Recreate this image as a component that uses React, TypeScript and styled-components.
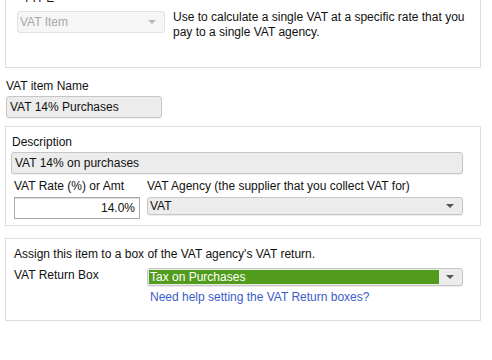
import React from "react";
import styled, { createGlobalStyle } from "styled-components";

const Global = createGlobalStyle`
  html, body { margin: 0; padding: 0; background: #fff; }
  body { font-family: "Liberation Sans", Arial, sans-serif; font-size: 12px; color: #111; }
`;

const Page = styled.div`
  width: 492px;
  height: 360px;
  overflow: hidden;
  padding: 0 11px 0 5px;
  box-sizing: border-box;
`;

const TypeFieldset = styled.fieldset`
  margin: -9px 0 0 0;
  padding: 2px 5px 0 11px;
  border: 1px solid #dedede;
  height: 73px;
  box-sizing: content-box;
  display: flex;
  align-items: flex-start;
  gap: 8px;
`;

const Legend = styled.legend`
  padding: 0 2px;
  margin-left: 4px;
  font-size: 12px;
  color: #222;
  line-height: 14px;
`;

const Panel = styled.div`
  border: 1px solid #dedede;
`;

const Select = styled.div<{ $w?: number; $disabled?: boolean; $mt?: number }>`
  width: ${(p) => (p.$w ? `${p.$w}px` : "auto")};
  height: 22px;
  margin-top: ${(p) => p.$mt ?? 0}px;
  box-sizing: border-box;
  border: 1px solid ${(p) => (p.$disabled ? "#e2e2e2" : "#c6c6c6")};
  border-radius: 3px;
  background: ${(p) => (p.$disabled ? "#f6f6f6" : "#ececec")};
  display: flex;
  align-items: stretch;
  padding: 1px;
  color: ${(p) => (p.$disabled ? "#a8a8a8" : "#111")};
  box-shadow: ${(p) => (p.$disabled ? "none" : "0 1px 1px rgba(0,0,0,0.08)")};
  flex: ${(p) => (p.$w ? "none" : "1")};
`;

const SelectValue = styled.div<{ $selected?: boolean }>`
  flex: 1;
  display: flex;
  align-items: center;
  padding-left: 1px;
  line-height: 14px;
  background: ${(p) => (p.$selected ? "#519c1c" : "transparent")};
  color: ${(p) => (p.$selected ? "#fff" : "inherit")};
`;

const Arrow = styled.div<{ $disabled?: boolean }>`
  width: 22px;
  display: flex;
  align-items: center;
  justify-content: center;
  &::after {
    content: "";
    border-left: 4px solid transparent;
    border-right: 4px solid transparent;
    border-top: 4px solid ${(p) => (p.$disabled ? "#b8b8b8" : "#555")};
  }
`;

const TypeText = styled.div`
  width: 300px;
  line-height: 15px;
  padding-top: 3px;
  color: #111;
  font-size: 12px;
`;

const Label = styled.div<{ $pl?: number; $w?: number }>`
  line-height: 14px;
  padding-left: ${(p) => p.$pl ?? 0}px;
  width: ${(p) => (p.$w ? `${p.$w}px` : "auto")};
  flex: none;
  color: #111;
`;

const Field = styled.div<{ $w?: number; $white?: boolean; $right?: boolean }>`
  width: ${(p) => (p.$w ? `${p.$w}px` : "auto")};
  height: 22px;
  box-sizing: border-box;
  border: 1px solid ${(p) => (p.$white ? "#a9a9a9" : "#c6c6c6")};
  border-radius: ${(p) => (p.$white ? "0" : "3px")};
  background: ${(p) => (p.$white ? "#fff" : "#ececec")};
  display: flex;
  align-items: center;
  justify-content: ${(p) => (p.$right ? "flex-end" : "flex-start")};
  padding: 0 4px 0 3px;
  box-shadow: ${(p) => (p.$white ? "inset 0 1px 0 #ddd" : "0 1px 1px rgba(0,0,0,0.06)")};
  color: #111;
`;

const NameBlock = styled.div`
  display: flex;
  flex-direction: column;
  gap: 3px;
  padding: 11px 0 0 1px;
  margin-bottom: 8px;
`;

const Row = styled.div<{ $gap?: number; $mt?: number; $pl?: number }>`
  display: flex;
  gap: ${(p) => p.$gap ?? 0}px;
  margin-top: ${(p) => p.$mt ?? 0}px;
  padding-left: ${(p) => p.$pl ?? 0}px;
  align-items: flex-start;
`;

const Col = styled.div<{ $w?: number; $gap?: number }>`
  display: flex;
  flex-direction: column;
  gap: ${(p) => p.$gap ?? 4}px;
  width: ${(p) => (p.$w ? `${p.$w}px` : "auto")};
  flex: ${(p) => (p.$w ? "none" : "1")};
`;

const DescPanel = styled(Panel)`
  padding: 8px 17px 6px 5px;
  display: flex;
  flex-direction: column;
  margin-bottom: 12px;
`;

const ReturnPanel = styled(Panel)`
  padding: 8px 17px 11px 8px;
  height: 62px;
`;

const Link = styled.a`
  color: #3d5cc9;
  text-decoration: none;
  line-height: 14px;
  display: block;
  padding: 4px 0 0 3px;
`;

export default function App() {
  return (
    <>
      <Global />
      <Page>
        <TypeFieldset>
          <Legend>TYPE</Legend>
          <Select $w={148} $disabled $mt={4}>
            <SelectValue>VAT Item</SelectValue>
            <Arrow $disabled />
          </Select>
          <TypeText>
            Use to calculate a single VAT at a specific rate that you pay to a single VAT agency.
          </TypeText>
        </TypeFieldset>

        <NameBlock>
          <Label>VAT item Name</Label>
          <Field $w={156}>VAT 14% Purchases</Field>
        </NameBlock>

        <DescPanel>
          <Col $gap={3}>
            <Label $pl={1}>Description</Label>
            <Field>VAT 14% on purchases</Field>
          </Col>
          <Row $gap={7} $mt={5} $pl={3}>
            <Col $w={126} $gap={4}>
              <Label>VAT Rate (%) or Amt</Label>
              <Field $white $right>14.0%</Field>
            </Col>
            <Col $gap={4}>
              <Label>VAT Agency (the supplier that you collect VAT for)</Label>
              <Select>
                <SelectValue>VAT</SelectValue>
                <Arrow />
              </Select>
            </Col>
          </Row>
        </DescPanel>

        <ReturnPanel>
          <Label>Assign this item to a box of the VAT agency's VAT return.</Label>
          <Row $mt={7}>
            <Label $w={133}>VAT Return Box</Label>
            <Col $gap={0}>
              <Select>
                <SelectValue $selected>Tax on Purchases</SelectValue>
                <Arrow />
              </Select>
              <Link>Need help setting the VAT Return boxes?</Link>
            </Col>
          </Row>
        </ReturnPanel>
      </Page>
    </>
  );
}
